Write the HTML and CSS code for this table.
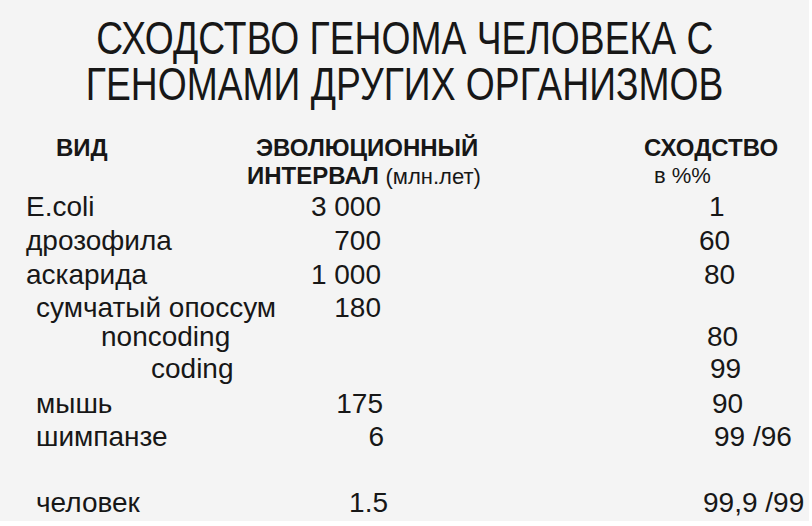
FILE: index.html
```html
<!DOCTYPE html>
<html lang="ru">
<head>
<meta charset="utf-8">
<title>Сходство генома человека</title>
<link rel="stylesheet" href="styles.css">
</head>
<body>
<div class="page">
  <h1 class="title">
    <span class="tline l1">СХОДСТВО ГЕНОМА ЧЕЛОВЕКА С</span>
    <span class="tline l2">ГЕНОМАМИ ДРУГИХ ОРГАНИЗМОВ</span>
  </h1>
  <div class="table">
    <div class="head hr1">
      <div class="h-name">ВИД</div>
      <div class="h-int">ЭВОЛЮЦИОННЫЙ</div>
      <div class="h-sim">СХОДСТВО</div>
    </div>
    <div class="head hr2">
      <div class="h-name2"></div>
      <div class="h-int2">ИНТЕРВАЛ <span class="unit">(млн.лет)</span></div>
      <div class="h-sim2">в %%</div>
    </div>
    <div class="row">
      <div class="name n-a">E.coli</div><div class="int">3 000</div><div class="sim s-1">1</div>
    </div>
    <div class="row">
      <div class="name n-a">дрозофила</div><div class="int">700</div><div class="sim s-60">60</div>
    </div>
    <div class="row r33">
      <div class="name n-a">аскарида</div><div class="int">1 000</div><div class="sim s-80">80</div>
    </div>
    <div class="row r29">
      <div class="name n-b">сумчатый опоссум</div><div class="int">180</div><div class="sim"></div>
    </div>
    <div class="row r32">
      <div class="name n-nc">noncoding</div><div class="int"></div><div class="sim s-80b">80</div>
    </div>
    <div class="row r35">
      <div class="name n-c">coding</div><div class="int"></div><div class="sim s-99">99</div>
    </div>
    <div class="row r33">
      <div class="name n-b">мышь</div><div class="int i-175">175</div><div class="sim s-90">90</div>
    </div>
    <div class="row r66">
      <div class="name n-b">шимпанзе</div><div class="int i-6">6</div><div class="sim s-9996">99 /96</div>
    </div>
    <div class="row">
      <div class="name n-b">человек</div><div class="int i-15">1.5</div><div class="sim s-999">99,9 /99</div>
    </div>
  </div>
</div>
</body>
</html>
```

FILE: styles.css
```css
html, body {
  margin: 0;
  padding: 0;
  background: #ffffff;
}

.page {
  width: 809px;
  height: 521px;
  background: #f4f4f4;
  color: #171717;
  font-family: "Liberation Sans", Arial, sans-serif;
  overflow: hidden;
}

.title {
  margin: 0;
  padding-top: 15px;
  font-weight: normal;
  display: flex;
  flex-direction: column;
  align-items: center;
}

.tline {
  display: block;
  font-size: 46px;
  line-height: 46px;
  white-space: nowrap;
  transform: scaleX(0.81);
}

.table {
  margin-top: 27px;
}

.head {
  display: flex;
  height: 28px;
  line-height: 28px;
  font-size: 24px;
  font-weight: bold;
  white-space: nowrap;
}

.h-name { width: 200px; padding-left: 56px; }
.h-int { width: 388px; }

.h-name2 { width: 247px; }
.h-int2 { width: 407px; }
.h-sim2 { font-weight: normal; font-size: 22px; }

.unit {
  font-weight: normal;
  font-size: 22px;
}

.row {
  display: grid;
  grid-template-columns: 300px 85px 1fr;
  height: 34px;
  line-height: 34px;
  font-size: 28px;
  white-space: nowrap;
}

.r29 { height: 29px; }
.r32 { height: 32px; }
.r33 { height: 33px; }
.r35 { height: 35px; }
.r66 { height: 66px; }

.name { padding-left: 25px; }
.n-a { padding-left: 26px; }
.n-b { padding-left: 36px; }
.n-nc { padding-left: 101px; }
.n-c { padding-left: 151px; }

.int {
  text-align: right;
  padding-right: 4px;
}
.i-175 { padding-right: 2px; }
.i-6 { padding-right: 1px; }
.i-15 { padding-right: 0; margin-right: -3px; }

.sim { padding-left: 320px; }
.s-1 { padding-left: 324px; }
.s-60 { padding-left: 314px; }
.s-80 { padding-left: 319px; }
.s-80b { padding-left: 322px; }
.s-99 { padding-left: 325px; }
.s-90 { padding-left: 327px; }
.s-9996 { padding-left: 329px; }
.s-999 { padding-left: 318px; }
```
